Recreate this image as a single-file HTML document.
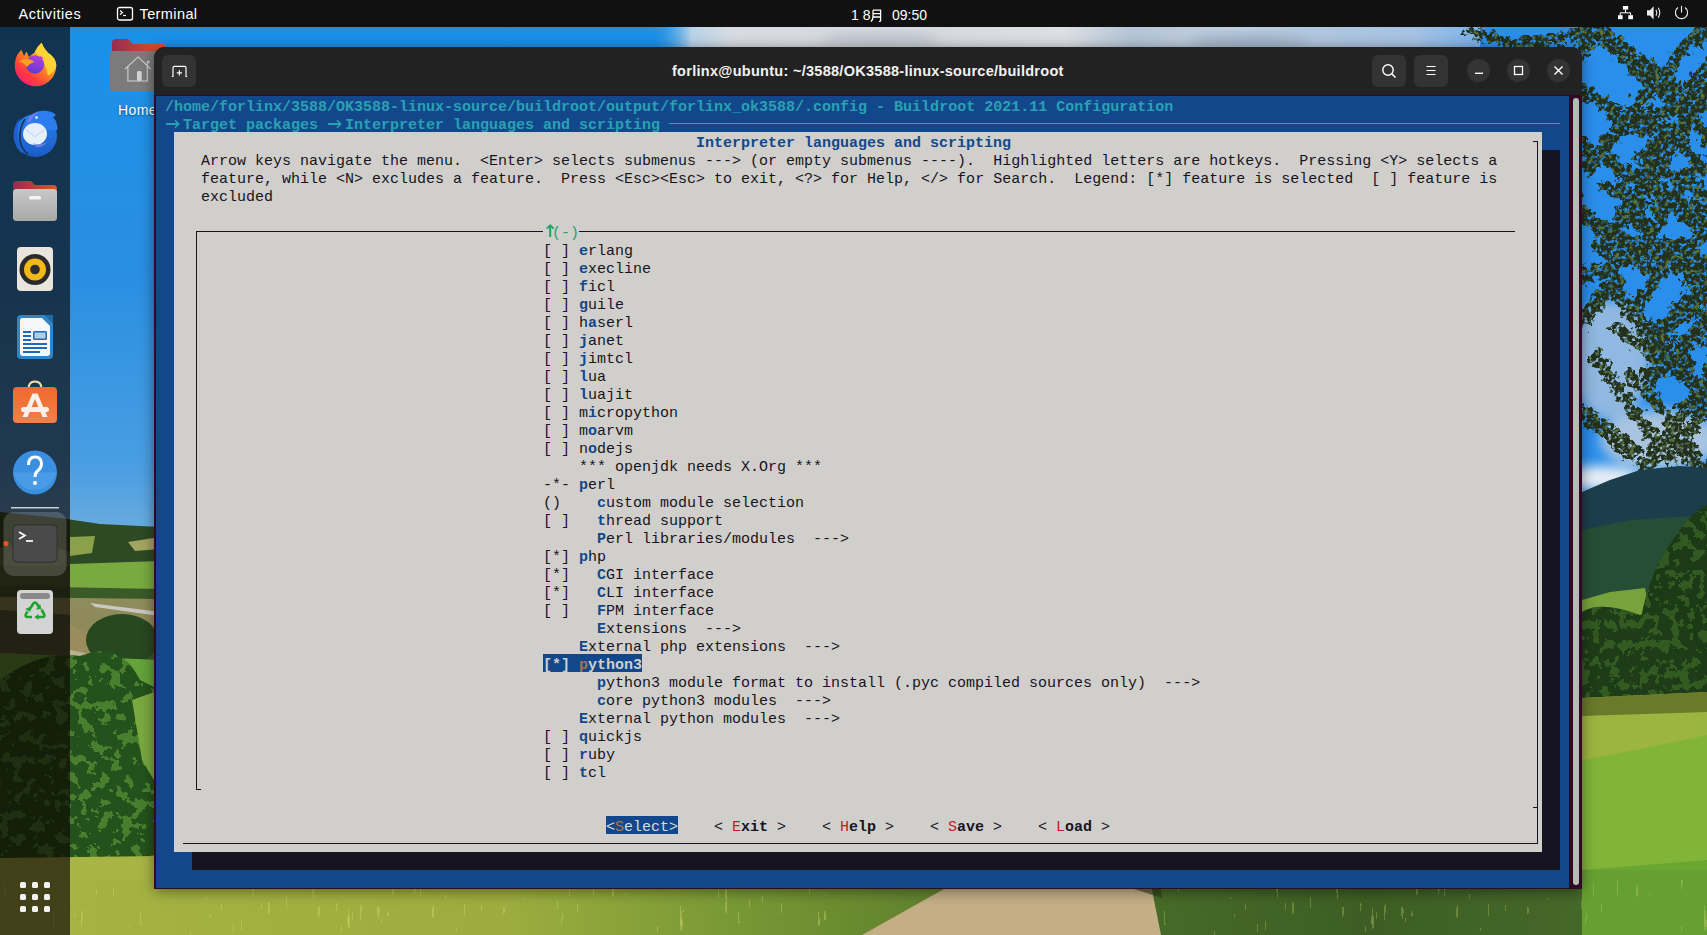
<!DOCTYPE html>
<html><head><meta charset="utf-8">
<style>
*{margin:0;padding:0;box-sizing:border-box}
html,body{width:1707px;height:935px;overflow:hidden;background:#2a8fe0;position:relative;font-family:"Liberation Sans",sans-serif}
.abs{position:absolute}
.row{position:absolute;white-space:pre;font-family:"Liberation Mono",monospace;font-size:15px;line-height:18px;height:18px}
.k{color:#171421}
.kb{color:#171421;font-weight:bold}
.bb{color:#12488b;font-weight:bold}
.c{color:#2aa1b3;font-weight:bold}
.g{color:#26a269}
.r{color:#c01c28;font-weight:bold}
.w{color:#d0cfcc;font-weight:bold}
.wn{color:#dcdbd8}
.yn{color:#b0784a}
.rn{color:#c01c28}
.y{color:#a2734c;font-weight:bold}
.arr{display:inline-block;width:9px;position:relative}
.arr svg{position:absolute;left:1px;top:-9px}
</style></head><body>
<svg class="abs" style="left:0;top:0" width="1707" height="935" viewBox="0 0 1707 935">
<defs>
<linearGradient id="sky" x1="0" y1="0" x2="0" y2="1">
 <stop offset="0" stop-color="#1890e8"/><stop offset="0.3" stop-color="#2a8fe2"/><stop offset="0.5" stop-color="#4a9ee2"/><stop offset="0.57" stop-color="#6aacde"/>
</linearGradient>
<filter id="blur6"><feGaussianBlur stdDeviation="6"/></filter>
<filter id="blur2"><feGaussianBlur stdDeviation="1.5"/></filter>
<filter id="leaves" x="0" y="0" width="100%" height="100%" filterUnits="objectBoundingBox" color-interpolation-filters="sRGB">
 <feTurbulence type="fractalNoise" baseFrequency="0.05 0.065" numOctaves="4" seed="11" result="n"/>
 <feColorMatrix in="n" type="matrix" values="0 0 0 0 0.11  0 0 0 0 0.15  0 0 0 0 0.09  4 0 0 0 -1.62" result="m"/>
 <feComponentTransfer in="m"><feFuncA type="discrete" tableValues="0 0 1 1"/></feComponentTransfer>
</filter>
<filter id="leaves2" x="0" y="0" width="100%" height="100%" filterUnits="objectBoundingBox" color-interpolation-filters="sRGB">
 <feTurbulence type="fractalNoise" baseFrequency="0.12" numOctaves="3" seed="5" result="n"/>
 <feColorMatrix in="n" type="matrix" values="0 0 0 0 0.27  0 0 0 0 0.36  0 0 0 0 0.20  3 0 0 0 -1.5" result="m"/>
 <feComponentTransfer in="m"><feFuncA type="discrete" tableValues="0 0 1 1"/></feComponentTransfer>
</filter>
<filter id="leaves3" x="0" y="0" width="100%" height="100%" filterUnits="objectBoundingBox" color-interpolation-filters="sRGB">
 <feTurbulence type="fractalNoise" baseFrequency="0.09" numOctaves="3" seed="21" result="n"/>
 <feColorMatrix in="n" type="matrix" values="0 0 0 0 0.34  0 0 0 0 0.58  0 0 0 0 0.22  -4 0 0 0 2.2" result="m"/>
 <feComponentTransfer in="m" result="sp"><feFuncA type="discrete" tableValues="0 0 0.7 0.7"/></feComponentTransfer>
 <feComposite in="sp" in2="SourceAlpha" operator="in" result="sp2"/>
 <feMerge><feMergeNode in="SourceGraphic"/><feMergeNode in="sp2"/></feMerge>
</filter>
<filter id="ragged" x="-10%" y="-10%" width="120%" height="120%" color-interpolation-filters="sRGB">
 <feTurbulence type="turbulence" baseFrequency="0.09" numOctaves="2" seed="8" result="t"/>
 <feDisplacementMap in="SourceGraphic" in2="t" scale="16" xChannelSelector="R" yChannelSelector="G" result="d"/>
 <feTurbulence type="fractalNoise" baseFrequency="0.25" numOctaves="2" seed="2" result="h"/>
 <feColorMatrix in="h" type="matrix" values="0 0 0 0 0  0 0 0 0 0  0 0 0 0 0  -5 0 0 0 3.6" result="ha"/>
 <feComposite in="d" in2="ha" operator="in" result="br"/>
 <feTurbulence type="fractalNoise" baseFrequency="0.2" numOctaves="2" seed="9" result="h2"/>
 <feColorMatrix in="h2" type="matrix" values="0 0 0 0 0.34  0 0 0 0 0.46  0 0 0 0 0.24  6 0 0 0 -3.3" result="hl"/>
 <feComposite in="hl" in2="br" operator="in" result="hl2"/>
 <feMerge><feMergeNode in="br"/><feMergeNode in="hl2"/></feMerge>
</filter>
<filter id="leaves4" x="0" y="0" width="100%" height="100%" filterUnits="objectBoundingBox" color-interpolation-filters="sRGB">
 <feTurbulence type="fractalNoise" baseFrequency="0.1" numOctaves="3" seed="31" result="n"/>
 <feColorMatrix in="n" type="matrix" values="0 0 0 0 0.22  0 0 0 0 0.38  0 0 0 0 0.14  -4 0 0 0 2.3" result="m"/>
 <feComponentTransfer in="m" result="sp"><feFuncA type="discrete" tableValues="0 0 0.8 0.8"/></feComponentTransfer>
 <feComposite in="sp" in2="SourceAlpha" operator="in" result="sp2"/>
 <feMerge><feMergeNode in="SourceGraphic"/><feMergeNode in="sp2"/></feMerge>
</filter>
<filter id="grassn" x="0" y="0" width="100%" height="100%" filterUnits="objectBoundingBox" color-interpolation-filters="sRGB">
 <feTurbulence type="fractalNoise" baseFrequency="0.25 0.03" numOctaves="2" seed="3" result="n"/>
 <feColorMatrix in="n" type="matrix" values="0 0 0 0 0.85  0 0 0 0 0.88  0 0 0 0 0.45  2 0 0 0 -1.0"/>
 <feComponentTransfer><feFuncA type="discrete" tableValues="0 0 0.35 0.5"/></feComponentTransfer>
</filter>
<linearGradient id="grassL" x1="0" y1="0" x2="1" y2="0">
 <stop offset="0" stop-color="#a8b444"/><stop offset="0.3" stop-color="#9cac3e"/><stop offset="0.42" stop-color="#7a9a36"/><stop offset="0.5" stop-color="#6a8a30"/><stop offset="0.68" stop-color="#466a28"/><stop offset="0.8" stop-color="#3c5e24"/><stop offset="1" stop-color="#4a6e2c"/>
</linearGradient>
<linearGradient id="cloudg" x1="0" y1="0" x2="1" y2="0">
 <stop offset="0" stop-color="#1a90e8" stop-opacity="0"/><stop offset="0.05" stop-color="#b8d2ea"/><stop offset="0.1" stop-color="#d8dce2"/><stop offset="0.3" stop-color="#d4d8de"/><stop offset="0.5" stop-color="#dcdfe4"/><stop offset="0.58" stop-color="#b4c4d6"/><stop offset="0.7" stop-color="#c0cfdf"/><stop offset="0.8" stop-color="#b0c6de"/><stop offset="0.92" stop-color="#a6c2e2"/><stop offset="1" stop-color="#7ab2ea"/>
</linearGradient>
</defs>
<rect x="0" y="0" width="1707" height="935" fill="url(#sky)"/>
<rect x="650" y="20" width="830" height="40" fill="url(#cloudg)"/>
<g filter="url(#blur6)"><ellipse cx="880" cy="40" rx="60" ry="8" fill="#c0c6ce"/><ellipse cx="1250" cy="42" rx="60" ry="8" fill="#9fb2c8"/></g>
<rect x="1480" y="20" width="227" height="470" fill="#2a8eec"/>
<g filter="url(#blur6)"><ellipse cx="1610" cy="360" rx="40" ry="60" fill="#90b8e0"/><ellipse cx="1660" cy="440" rx="60" ry="30" fill="#a8c4e0"/><ellipse cx="1600" cy="478" rx="40" ry="12" fill="#e8eef4"/></g>
<g stroke="#22301c" fill="none" filter="url(#ragged)"><path d="M1657,238 Q1686,248 1721,269" stroke-width="13"/><path d="M1648,338 Q1677,300 1709,278" stroke-width="15"/><path d="M1680,47 Q1744,6 1798,-49" stroke-width="10"/><path d="M1569,29 Q1657,-14 1724,-39" stroke-width="13"/><path d="M1639,467 Q1684,401 1727,335" stroke-width="13"/><path d="M1622,204 Q1653,243 1707,271" stroke-width="11"/><path d="M1658,469 Q1700,529 1747,598" stroke-width="16"/><path d="M1613,128 Q1683,101 1755,73" stroke-width="11"/><path d="M1566,331 Q1594,293 1619,270" stroke-width="16"/><path d="M1601,37 Q1654,82 1706,133" stroke-width="12"/><path d="M1630,150 Q1703,192 1778,232" stroke-width="11"/><path d="M1670,107 Q1723,33 1762,-26" stroke-width="10"/><path d="M1596,251 Q1643,168 1690,109" stroke-width="17"/><path d="M1658,426 Q1692,457 1725,490" stroke-width="17"/><path d="M1699,141 Q1741,97 1805,62" stroke-width="14"/><path d="M1625,315 Q1655,258 1708,225" stroke-width="12"/><path d="M1690,81 Q1730,89 1772,119" stroke-width="14"/><path d="M1695,307 Q1734,359 1769,391" stroke-width="15"/><path d="M1611,287 Q1642,329 1689,362" stroke-width="14"/><path d="M1677,436 Q1721,383 1750,336" stroke-width="13"/><path d="M1588,347 Q1629,406 1668,460" stroke-width="13"/><path d="M1648,117 Q1673,133 1706,169" stroke-width="12"/><path d="M1573,85 Q1615,112 1648,131" stroke-width="13"/><path d="M1564,188 Q1597,231 1651,269" stroke-width="13"/><path d="M1608,130 Q1653,104 1708,93" stroke-width="13"/><path d="M1636,156 Q1682,112 1745,69" stroke-width="14"/><path d="M1664,250 Q1734,291 1788,344" stroke-width="18"/><path d="M1625,260 Q1664,204 1694,156" stroke-width="12"/><path d="M1633,168 Q1664,205 1697,228" stroke-width="11"/><path d="M1567,136 Q1639,175 1707,219" stroke-width="14"/><path d="M1578,168 Q1626,114 1660,65" stroke-width="14"/><path d="M1610,323 Q1682,366 1738,425" stroke-width="15"/><path d="M1576,404 Q1613,437 1634,452" stroke-width="17"/><path d="M1695,471 Q1735,437 1757,391" stroke-width="12"/><path d="M1566,276 Q1614,265 1646,234" stroke-width="14"/><path d="M1640,376 Q1674,349 1699,321" stroke-width="19"/><path d="M1561,65 Q1603,18 1639,-27" stroke-width="15"/><path d="M1685,407 Q1729,371 1752,335" stroke-width="17"/><path d="M1701,338 Q1761,381 1827,446" stroke-width="14"/><path d="M1594,180 Q1617,189 1664,210" stroke-width="10"/><path d="M1643,336 Q1698,296 1738,249" stroke-width="19"/><path d="M1622,368 Q1661,406 1693,452" stroke-width="12"/><path d="M1672,474 Q1709,483 1747,509" stroke-width="16"/><path d="M1594,26 Q1633,52 1677,87" stroke-width="14"/><path d="M1687,196 Q1757,241 1820,282" stroke-width="10"/><path d="M1617,126 Q1658,67 1702,19" stroke-width="12"/><path d="M1575,212 Q1633,242 1687,268" stroke-width="13"/><path d="M1615,174 Q1642,231 1689,281" stroke-width="11"/><path d="M1460,27 L1560,50" stroke-width="10"/><path d="M1500,40 L1600,27" stroke-width="10"/></g>
<path d="M1582,492 L1610,480 L1640,470 L1680,466 L1707,468 L1707,620 L1582,620 Z" fill="#1c3e4c"/>
<path d="M1582,530 L1630,520 L1707,515 L1707,620 L1582,620 Z" fill="#264e36"/>
<path d="M1582,600 L1610,592 L1645,588 L1650,615 L1582,618 Z" fill="#78a23c"/>
<path d="M1640,700 Q1630,620 1660,560 Q1690,510 1707,505 L1707,700 Z" fill="#1c3a16" filter="url(#leaves4)"/>
<path d="M1582,700 L1582,612 Q1600,600 1640,615 Q1680,600 1700,650 L1707,700 Z" fill="#1e3c18" filter="url(#leaves4)"/>
<path d="M1582,698 L1707,692 L1707,770 L1582,775 Z" fill="#9cb440"/>
<path d="M1582,698 L1707,692 L1707,712 L1582,716 Z" fill="#6a7a2a"/>
<path d="M1582,760 Q1640,750 1707,735 L1707,935 L1582,935 Z" fill="#82b43a"/>
<path d="M1582,870 L1707,860 L1707,935 L1582,935 Z" fill="#6aa632"/>
<rect x="0" y="540" width="160" height="330" fill="#3a5a2a"/>
<path d="M0,512 L60,518 L100,524 L160,527 L160,566 L0,566 Z" fill="#2c4a24"/>
<path d="M70,537 L95,536 L92,553 L70,556 Z" fill="#8aa04a"/>
<path d="M128,542 L160,537 L160,549 L135,551 Z" fill="#a4a462"/>
<path d="M0,548 L30,540 L70,552 L70,568 L0,568 Z" fill="#5a7040"/>
<path d="M70,564 L160,561 L160,592 L70,588 Z" fill="#78aa40"/>
<path d="M0,566 L70,566 L70,588 L0,588 Z" fill="#4a6034"/>
<path d="M0,586 L160,589 L160,601 L0,598 Z" fill="#3a5a28"/>
<path d="M0,597 L160,599 L160,627 L0,622 Z" fill="#8e8c5a"/>
<path d="M90,603 L160,612 L160,616 L95,607 Z" fill="#c8c8c0"/>
<path d="M70,612 L90,606 L110,620 L160,618 L160,642 L70,642 Z" fill="#8e8a5a"/>
<path d="M70,625 L105,640 L105,662 L70,662 Z" fill="#9a8c5c"/>
<path d="M0,610 L70,615 L70,662 L0,662 Z" fill="#50583a"/>
<ellipse cx="122" cy="640" rx="36" ry="26" fill="#284820"/>
<path d="M0,653 L160,660 L160,702 L0,702 Z" fill="#64a23a"/>
<path d="M70,650 L95,655 L100,668 L70,660 Z" fill="#b8b090"/>
<path d="M0,680 Q40,650 80,656 Q120,640 140,680 L160,690 L160,860 L0,860 Z" fill="#24521c" filter="url(#leaves3)"/>
<path d="M132,700 L160,690 L160,790 L142,760 Z" fill="#7aa840"/>
<path d="M0,858 L160,856 L160,935 L0,935 Z" fill="#a8b444"/>
<rect x="0" y="880" width="1707" height="60" fill="url(#grassL)"/>
<path d="M960,880 L1150,880 L1161,935 L862,935 Z" fill="#c4ae86"/>
<rect x="0" y="880" width="860" height="60" fill="#000" filter="url(#grassn)"/>
<rect x="1582" y="870" width="125" height="65" fill="#66a032"/>
<rect x="1160" y="880" width="547" height="60" fill="#000" filter="url(#grassn)" opacity="0.8"/>
<path d="M1125,886 L1160,884 L1162,898 Z" fill="#2a3a1a" opacity="0.6"/>
</svg>

<!-- top bar -->
<div class="abs" style="left:0;top:0;width:1707px;height:27px;background:#111111"></div>
<div class="abs" style="left:18.5px;top:4px;font-size:14.5px;color:#fff;line-height:20px;letter-spacing:0.55px">Activities</div>
<svg class="abs" style="left:116px;top:6px" width="18" height="16" viewBox="0 0 18 16"><rect x="1.5" y="1.5" width="15" height="12.5" rx="2" fill="none" stroke="#fff" stroke-width="1.3"/><path d="M4 4.5 L6.5 6.5 L4 8.5" fill="none" stroke="#fff" stroke-width="1.2"/><path d="M7 9.5 H10" stroke="#fff" stroke-width="1.2"/></svg>
<div class="abs" style="left:139.5px;top:4px;font-size:14.5px;color:#fff;line-height:20px;letter-spacing:0.4px">Terminal</div>
<div class="abs" style="left:851px;top:5px;font-size:14px;color:#fff;line-height:20px;white-space:pre">1 8</div>
<svg class="abs" style="left:870px;top:9px" width="13" height="13" viewBox="0 0 13 13"><path d="M3 1.2V7.5Q3 10.8 1 12.6M3 1.2H10.6V11.4Q10.6 12.6 9 12.4M3 4.6H10.6M3 8H10.6" stroke="#fff" stroke-width="1.3" fill="none"/></svg>
<div class="abs" style="left:892px;top:5px;font-size:14px;color:#fff;line-height:20px;white-space:pre">09:50</div>
<!-- tray icons -->
<svg class="abs" style="left:1600px;top:0" width="107" height="27" viewBox="1600 0 107 27">
 <g fill="#fff"><rect x="1622.9" y="6" width="5.3" height="3.6"/><rect x="1618" y="15.2" width="4.6" height="4"/><rect x="1628.3" y="15.2" width="4.7" height="4"/></g>
 <path d="M1625.5 9.5V12.8M1620.3 15.3V12.8H1630.6V15.3" stroke="#fff" stroke-width="1" fill="none"/>
 <path d="M1647 10.3H1650L1653.6 6.2V19.6L1650 15.6H1647Z" fill="#eee"/>
 <path d="M1656 9.8Q1657.6 12.8 1656 15.8M1658.2 7.8Q1661.3 12.8 1658.2 17.8" stroke="#eee" stroke-width="1.1" fill="none"/>
 <path d="M1681.5 5.8V12.6" stroke="#eee" stroke-width="1.1"/><path d="M1678 7.5A6.1 6.1 0 1 0 1685 7.5" stroke="#eee" stroke-width="1.1" fill="none"/>
</svg>

<!-- dock -->
<div class="abs" style="left:0;top:27px;width:70px;height:908px;background:rgba(12,4,2,0.66)"></div>
<svg class="abs" style="left:0;top:27px" width="70" height="908" viewBox="0 27 70 908">
 <defs>
  <radialGradient id="ffo" cx="0.35" cy="0.8" r="0.9"><stop offset="0" stop-color="#ff3a5a"/><stop offset="0.45" stop-color="#ff6a2a"/><stop offset="0.8" stop-color="#ffb020"/><stop offset="1" stop-color="#ffd030"/></radialGradient>
  <radialGradient id="ffp" cx="0.4" cy="0.4" r="0.7"><stop offset="0" stop-color="#9a3ad8"/><stop offset="1" stop-color="#5a2ab0"/></radialGradient>
  <linearGradient id="tbb" x1="0" y1="0" x2="0" y2="1"><stop offset="0" stop-color="#2a80ee"/><stop offset="1" stop-color="#1a5cc8"/></linearGradient>
  <linearGradient id="fold" x1="0" y1="0" x2="1" y2="0"><stop offset="0" stop-color="#9a2a52"/><stop offset="1" stop-color="#e0561e"/></linearGradient>
  <linearGradient id="foldb" x1="0" y1="0" x2="0" y2="1"><stop offset="0" stop-color="#c8c8c8"/><stop offset="1" stop-color="#a8a8a8"/></linearGradient>
  <linearGradient id="appc" x1="0" y1="0" x2="0" y2="1"><stop offset="0" stop-color="#f06a2a"/><stop offset="1" stop-color="#f0804a"/></linearGradient>
 </defs>
 <!-- firefox -->
 <defs>
  <linearGradient id="ffb" x1="0.9" y1="0.1" x2="0.2" y2="1"><stop offset="0" stop-color="#ffe030"/><stop offset="0.45" stop-color="#ff8a20"/><stop offset="0.75" stop-color="#ff3a40"/><stop offset="1" stop-color="#ff1a80"/></linearGradient>
  <linearGradient id="ffg" x1="0.7" y1="0" x2="0.3" y2="1"><stop offset="0" stop-color="#b840e0"/><stop offset="1" stop-color="#5a3ad0"/></linearGradient>
 </defs>
 <path d="M21.5 50 L24 56 L26.5 51.5 L29 57 Q32 54 34.5 52.5 Q36.5 47 41.5 42.7 Q45 51 51 55 Q56.5 60 56.3 66 A20.8 20.8 0 1 1 15.2 61 Q16.5 54 21.5 50 Z" fill="url(#ffb)"/>
 <path d="M34.5 52.5 Q36.5 47 41.5 42.7 Q45 51 51 55 Q56.5 60 56.3 66 Q54 72 48 76 Q46 62 36 53 Z" fill="#ffd838" opacity="0.85"/>
 <circle cx="35" cy="64.5" r="9.2" fill="url(#ffg)"/>
 <path d="M19 61 Q24 58 30 59.5 Q33 60.5 34.5 62 Q30 63 27 67 Q24 63 19 61 Z" fill="#ffa020"/>
 <path d="M40 56 Q43 57 43.5 59 L39.5 58 Z" fill="#b840e0"/>
 <!-- thunderbird -->
 <circle cx="35.5" cy="135.5" r="21.5" fill="url(#tbb)"/>
 <path d="M26 126 Q28 113 40 111 Q51 110 56 115 L53 117.5 Q57.5 121 57.5 130 L40 130 Z" fill="#2a7ef0"/>
 <path d="M27 122 Q30 113 40 111.5 Q34 114 30 122 Z" fill="#9a7ae8" opacity="0.7"/>
 <path d="M20.5 116 Q12 126 13 138 Q15 150 24 155 Q17 144 17.5 132 Q18 122 20.5 116 Z" fill="#1a62d0"/>
 <path d="M25 119 Q19 128 20 140 Q21 149 28 154" stroke="#1b3250" stroke-width="1.6" fill="none"/>
 <path d="M20.5 116 Q12 126 13 138 Q15 150 24 155" stroke="#1b3250" stroke-width="1.2" fill="none"/>
 <circle cx="36.5" cy="117.5" r="1.2" fill="#fff"/>
 <ellipse cx="35" cy="134" rx="12" ry="11" fill="#e6f0fc"/>
 <path d="M25.5 129.5 L34 136 Q35 137 36 136 L44.5 129.5" stroke="#c8dcf4" stroke-width="1.3" fill="none"/>
 <path d="M33 143 Q40 146 47 142 Q43 148 36 147 Z" fill="#7a8ae0" opacity="0.8"/>
 <!-- files -->
 <path d="M13 185 Q13 181 17 181 H31 L35 185 H53 Q57 185 57 189 V200 H13 Z" fill="url(#fold)"/>
 <rect x="13" y="189" width="44" height="32" rx="3.5" fill="url(#foldb)"/>
 <rect x="29" y="196" width="12" height="3.5" rx="1.5" fill="#f4f4f4"/>
 <!-- rhythmbox -->
 <rect x="17" y="247" width="36" height="44" rx="4" fill="#e9e5dc"/>
 <circle cx="35" cy="269.5" r="15.5" fill="#2a2a2e"/>
 <circle cx="35" cy="269.5" r="11" fill="#f0b818"/>
 <circle cx="35" cy="269.5" r="4.8" fill="#2e2e30"/>
 <!-- writer -->
 <path d="M21 315 H45 L53 323 V355 Q53 359 49 359 H21 Q17 359 17 355 V319 Q17 315 21 315 Z" fill="#2f86c6"/>
 <path d="M22 318 H42 L50 326 V353 Q50 356 47 356 H23 Q20 356 20 353 V321 Q20 318 22 318 Z" fill="#f6f6f6"/>
 <path d="M45 315 H53 V323 Z" fill="#1f6aa8"/>
 <rect x="23" y="331" width="8" height="2" fill="#1a6ac0"/><rect x="23" y="335" width="8" height="2" fill="#1a6ac0"/><rect x="23" y="339" width="8" height="2" fill="#1a6ac0"/>
 <rect x="23" y="343" width="24" height="2" fill="#1a6ac0"/><rect x="23" y="347" width="24" height="2" fill="#1a6ac0"/><rect x="23" y="351" width="17" height="2" fill="#1a6ac0"/>
 <rect x="33" y="331" width="14" height="9" rx="1.5" fill="#1a6ac0"/><rect x="34.5" y="332.5" width="11" height="6" fill="#a8d0f0"/>
 <!-- app center -->
 <path d="M28.5 389 Q28.5 381.5 35 381.5 Q41.5 381.5 41.5 389" stroke="#f6dfb0" stroke-width="2.2" fill="none"/>
 <rect x="13" y="387" width="44" height="36" rx="4" fill="url(#appc)"/>
 <path d="M22.5 417 L32.5 393.5 H37.5 L47.5 417 H42.5 L35 399 L27.5 417 Z" fill="#faf0ea"/>
 <rect x="21" y="407" width="28" height="5" rx="2.5" fill="#faf0ea"/>
 <!-- help -->
 <circle cx="35" cy="472.5" r="22" fill="#3b8fe0"/>
 <path d="M13.5 472.5 A22 22 0 0 0 56.5 472.5 Z" fill="#4a9be6"/>
 <path d="M28.5 465 Q28.5 457 35 457 Q41.5 457 41.5 464 Q41.5 468 37.5 471 Q35 473 35 477" stroke="#fff" stroke-width="3" fill="none"/>
 <circle cx="35" cy="483" r="2" fill="#fff"/>
 <!-- separator -->
 <rect x="11" y="507" width="48" height="1.5" fill="#cfcfcf"/>
 <!-- terminal active -->
 <rect x="3.5" y="512" width="63" height="64" rx="10" fill="rgba(255,255,255,0.17)"/>
 <rect x="13" y="525" width="44" height="37" rx="4" fill="#3e3e3e" stroke="#2a2a2a" stroke-width="1"/>
 <rect x="13.5" y="525.5" width="43" height="36" rx="4" fill="#4a4a4a"/>
 <path d="M19 532 L25 535.5 L19 539" stroke="#fff" stroke-width="1.7" fill="none"/>
 <path d="M26 541 H33" stroke="#fff" stroke-width="1.7"/>
 <circle cx="6" cy="543.5" r="2.6" fill="#ee5522"/>
 <!-- trash -->
 <rect x="17" y="590" width="36" height="44" rx="4" fill="#d4d4d4"/>
 <rect x="20" y="593" width="30" height="6" rx="3" fill="#8a8a8a"/>
 <g fill="none" stroke="#22a030" stroke-width="2.6" stroke-linejoin="round">
  <path d="M29.5 609.5 L33 604 Q35 601 37 604 L38.5 606.5"/>
  <path d="M41.5 609.5 L44 614 Q45.5 617 42 617 L38 617"/>
  <path d="M32 617 L28 617 Q24.5 617 26 614 L27.5 611.5"/>
 </g>
 <g fill="#22a030"><path d="M36 609.5 L41.5 609 L40 604 Z"/><path d="M38.5 620 L38.5 614 L34.5 617 Z"/><path d="M25 609 L30.5 612 L30 607 Z"/></g>
 <!-- app grid -->
 <g fill="#f2f2f2">
  <rect x="20" y="882" width="6" height="6" rx="1.5"/><rect x="32" y="882" width="6" height="6" rx="1.5"/><rect x="44" y="882" width="6" height="6" rx="1.5"/>
  <rect x="20" y="894" width="6" height="6" rx="1.5"/><rect x="32" y="894" width="6" height="6" rx="1.5"/><rect x="44" y="894" width="6" height="6" rx="1.5"/>
  <rect x="20" y="906" width="6" height="6" rx="1.5"/><rect x="32" y="906" width="6" height="6" rx="1.5"/><rect x="44" y="906" width="6" height="6" rx="1.5"/>
 </g>
</svg>


<!-- desktop home icon -->
<svg class="abs" style="left:108px;top:37px" width="60" height="60" viewBox="0 0 60 60">
 <defs><linearGradient id="ftab" x1="0" y1="0" x2="1" y2="0"><stop offset="0" stop-color="#9a2a52"/><stop offset="1" stop-color="#e2561e"/></linearGradient></defs>
 <path d="M4 6 Q4 2 8 2 H20 L25 7 H54 Q58 7 58 11 V20 H4 Z" fill="url(#ftab)"/>
 <rect x="2" y="14" width="56" height="41" rx="4" fill="#7b7b7b"/>
 <path d="M16.9 32.1 L30.1 19.9 L42.8 32.1 M19.9 29.5 V44 H39.3 V24.5" stroke="#d2d2d2" stroke-width="1.1" fill="none"/>
 <path d="M38.8 24.5 L41.5 23.5 L41.5 26.5 Z" fill="#d2d2d2"/>
 <rect x="29" y="34" width="4.7" height="10" rx="1.5" fill="#d2d2d2"/>
</svg>
<div class="abs" style="left:118px;top:101px;font-size:14px;color:#fff;line-height:18px;letter-spacing:0.4px;text-shadow:0 1px 2px rgba(0,0,0,0.5)">Home</div>

<!-- window -->
<div class="abs" style="left:154px;top:47px;width:1428px;height:842px;background:#300a24;border-radius:11px 11px 0 0;overflow:hidden;box-shadow:0 2px 14px rgba(0,0,0,0.45)">
  <div class="abs" style="left:0;top:0;width:1428px;height:48px;background:#222222"></div>
</div>
<div class="abs" style="left:162px;top:55px;width:34px;height:32px;background:#333333;border-radius:6px"></div>
<svg class="abs" style="left:170px;top:62px" width="18" height="18" viewBox="0 0 18 18"><path d="M1.8 14.5 H3 V5.8 Q3 4.4 4.4 4.4 H14.6 Q16 4.4 16 5.8 V14.5 H17.2" stroke="#fff" stroke-width="1.15" fill="none"/><path d="M9.4 8.2 V13.4 M6.8 10.8 H12" stroke="#fff" stroke-width="1.15"/></svg>
<div class="abs" style="left:672px;top:61px;font-size:14.5px;font-weight:bold;color:#f2f2f2;line-height:20px;white-space:nowrap;letter-spacing:0.28px">forlinx@ubuntu: ~/3588/OK3588-linux-source/buildroot</div>
<!-- header buttons -->
<div class="abs" style="left:1372px;top:55px;width:34px;height:32px;background:#333333;border-radius:6px"></div>
<svg class="abs" style="left:1380px;top:62px" width="18" height="18" viewBox="0 0 18 18"><circle cx="8" cy="8" r="5.2" stroke="#fff" stroke-width="1.4" fill="none"/><path d="M11.8 11.8 L15.5 15.5" stroke="#fff" stroke-width="1.6"/></svg>
<div class="abs" style="left:1414px;top:55px;width:34px;height:32px;background:#333333;border-radius:6px"></div>
<svg class="abs" style="left:1422px;top:62px" width="18" height="18" viewBox="0 0 18 18"><path d="M4.5 4.5 H13.5 M4.5 8.5 H13.5 M4.5 12.5 H13.5" stroke="#fff" stroke-width="1.1"/></svg>
<div class="abs" style="left:1467px;top:59px;width:23px;height:23px;background:#333333;border-radius:50%"></div>
<div class="abs" style="left:1507px;top:59px;width:23px;height:23px;background:#333333;border-radius:50%"></div>
<div class="abs" style="left:1547px;top:59px;width:23px;height:23px;background:#333333;border-radius:50%"></div>
<svg class="abs" style="left:1467px;top:59px" width="104" height="23" viewBox="0 0 104 23">
 <path d="M8 14.3 H16" stroke="#fff" stroke-width="1.4"/>
 <rect x="47.5" y="7.5" width="8" height="8" stroke="#fff" stroke-width="1.3" fill="none"/>
 <path d="M87.5 7.5 L95.5 15.5 M95.5 7.5 L87.5 15.5" stroke="#fff" stroke-width="1.4"/>
</svg>
<div class="abs" style="left:1573px;top:98px;width:6px;height:787px;background:#b8b8b8;border-radius:3px"></div>

<div style="position:absolute;left:156px;top:96px;width:1413px;height:792px;background:#12488b"></div>
<div style="position:absolute;left:1542px;top:150px;width:18px;height:720px;background:#171421"></div>
<div style="position:absolute;left:192px;top:852px;width:1368px;height:18px;background:#171421"></div>
<div style="position:absolute;left:174px;top:132px;width:1368px;height:720px;background:#d0cfcc"></div>
<div style="position:absolute;left:543px;top:654px;width:99px;height:18px;background:#12488b"></div>
<div style="position:absolute;left:606px;top:816px;width:72px;height:18px;background:#12488b"></div>
<div style="position:absolute;left:669px;top:123px;width:891px;height:1px;background:#2aa1b3"></div>
<div style="position:absolute;left:196px;top:231px;width:347px;height:1px;background:#171421"></div>
<div style="position:absolute;left:579px;top:231px;width:936px;height:1px;background:#171421"></div>
<div style="position:absolute;left:196px;top:231px;width:1px;height:559px;background:#171421"></div>
<div style="position:absolute;left:196px;top:789px;width:5px;height:1px;background:#171421"></div>
<div style="position:absolute;left:1533px;top:141px;width:5px;height:1px;background:#171421"></div>
<div style="position:absolute;left:1537px;top:141px;width:1px;height:703px;background:#171421"></div>
<div style="position:absolute;left:183px;top:843px;width:1355px;height:1px;background:#171421"></div>
<div style="position:absolute;left:1533px;top:807px;width:5px;height:1px;background:#171421"></div>
<div class="row" style="left:165px;top:99px"><span class="c">/home/forlinx/3588/OK3588-linux-source/buildroot/output/forlinx_ok3588/.config - Buildroot 2021.11 Configuration</span></div>
<div class="row" style="left:165px;top:117px"><span class="c">  Target packages   Interpreter languages and scripting</span></div>
<div class="row" style="left:696px;top:135px"><span class="bb">Interpreter languages and scripting</span></div>
<div class="row" style="left:201px;top:153px"><span class="k">Arrow keys navigate the menu.  &lt;Enter&gt; selects submenus ---&gt; (or empty submenus ----).  Highlighted letters are hotkeys.  Pressing &lt;Y&gt; selects a</span></div>
<div class="row" style="left:201px;top:171px"><span class="k">feature, while &lt;N&gt; excludes a feature.  Press &lt;Esc&gt;&lt;Esc&gt; to exit, &lt;?&gt; for Help, &lt;/&gt; for Search.  Legend: [*] feature is selected  [ ] feature is</span></div>
<div class="row" style="left:201px;top:189px"><span class="k">excluded</span></div>
<div class="row" style="left:552px;top:225px"><span class="g">(-)</span></div>
<div class="row" style="left:543px;top:243px"><span class="k">[ ] </span><span class="bb">e</span><span class="k">rlang</span></div>
<div class="row" style="left:543px;top:261px"><span class="k">[ ] </span><span class="bb">e</span><span class="k">xecline</span></div>
<div class="row" style="left:543px;top:279px"><span class="k">[ ] </span><span class="bb">f</span><span class="k">icl</span></div>
<div class="row" style="left:543px;top:297px"><span class="k">[ ] </span><span class="bb">g</span><span class="k">uile</span></div>
<div class="row" style="left:543px;top:315px"><span class="k">[ ] </span><span class="k">h</span><span class="bb">a</span><span class="k">serl</span></div>
<div class="row" style="left:543px;top:333px"><span class="k">[ ] </span><span class="bb">j</span><span class="k">anet</span></div>
<div class="row" style="left:543px;top:351px"><span class="k">[ ] </span><span class="bb">j</span><span class="k">imtcl</span></div>
<div class="row" style="left:543px;top:369px"><span class="k">[ ] </span><span class="bb">l</span><span class="k">ua</span></div>
<div class="row" style="left:543px;top:387px"><span class="k">[ ] </span><span class="bb">l</span><span class="k">uajit</span></div>
<div class="row" style="left:543px;top:405px"><span class="k">[ ] </span><span class="k">m</span><span class="bb">i</span><span class="k">cropython</span></div>
<div class="row" style="left:543px;top:423px"><span class="k">[ ] </span><span class="k">m</span><span class="bb">o</span><span class="k">arvm</span></div>
<div class="row" style="left:543px;top:441px"><span class="k">[ ] </span><span class="k">n</span><span class="bb">o</span><span class="k">dejs</span></div>
<div class="row" style="left:543px;top:459px"><span class="k">    </span><span class="k">*** openjdk needs X.Org ***</span></div>
<div class="row" style="left:543px;top:477px"><span class="k">-*- </span><span class="bb">p</span><span class="k">erl</span></div>
<div class="row" style="left:543px;top:495px"><span class="k">()    </span><span class="bb">c</span><span class="k">ustom module selection</span></div>
<div class="row" style="left:543px;top:513px"><span class="k">[ ]   </span><span class="bb">t</span><span class="k">hread support</span></div>
<div class="row" style="left:543px;top:531px"><span class="k">      </span><span class="bb">P</span><span class="k">erl libraries/modules  ---&gt;</span></div>
<div class="row" style="left:543px;top:549px"><span class="k">[*] </span><span class="bb">p</span><span class="k">hp</span></div>
<div class="row" style="left:543px;top:567px"><span class="k">[*]   </span><span class="bb">C</span><span class="k">GI interface</span></div>
<div class="row" style="left:543px;top:585px"><span class="k">[*]   </span><span class="bb">C</span><span class="k">LI interface</span></div>
<div class="row" style="left:543px;top:603px"><span class="k">[ ]   </span><span class="bb">F</span><span class="k">PM interface</span></div>
<div class="row" style="left:543px;top:621px"><span class="k">      </span><span class="bb">E</span><span class="k">xtensions  ---&gt;</span></div>
<div class="row" style="left:543px;top:639px"><span class="k">    </span><span class="bb">E</span><span class="k">xternal php extensions  ---&gt;</span></div>
<div class="row" style="left:543px;top:657px"><span class="w">[*] </span><span class="y">p</span><span class="w">ython3</span></div>
<div class="row" style="left:543px;top:675px"><span class="k">      </span><span class="bb">p</span><span class="k">ython3 module format to install (.pyc compiled sources only)  ---&gt;</span></div>
<div class="row" style="left:543px;top:693px"><span class="k">      </span><span class="bb">c</span><span class="k">ore python3 modules  ---&gt;</span></div>
<div class="row" style="left:543px;top:711px"><span class="k">    </span><span class="bb">E</span><span class="k">xternal python modules  ---&gt;</span></div>
<div class="row" style="left:543px;top:729px"><span class="k">[ ] </span><span class="bb">q</span><span class="k">uickjs</span></div>
<div class="row" style="left:543px;top:747px"><span class="k">[ ] </span><span class="bb">r</span><span class="k">uby</span></div>
<div class="row" style="left:543px;top:765px"><span class="k">[ ] </span><span class="bb">t</span><span class="k">cl</span></div>
<div class="row" style="left:606px;top:819px"><span class="wn">&lt;</span><span class="yn">S</span><span class="wn">elect&gt;</span></div>
<div class="row" style="left:714px;top:819px"><span class="k">&lt; </span><span class="rn">E</span><span class="kb">xit</span><span class="k"> &gt;</span></div>
<div class="row" style="left:822px;top:819px"><span class="k">&lt; </span><span class="rn">H</span><span class="kb">elp</span><span class="k"> &gt;</span></div>
<div class="row" style="left:930px;top:819px"><span class="k">&lt; </span><span class="rn">S</span><span class="kb">ave</span><span class="k"> &gt;</span></div>
<div class="row" style="left:1038px;top:819px"><span class="k">&lt; </span><span class="rn">L</span><span class="kb">oad</span><span class="k"> &gt;</span></div>
<svg class="abs" style="left:166px;top:119px" width="14" height="10" viewBox="0 0 14 10"><path d="M0 5H12.5" stroke="#2aa1b3" stroke-width="2"/><path d="M9 1.3L12.7 5L9 8.7" stroke="#2aa1b3" stroke-width="1.6" fill="none"/></svg>
<svg class="abs" style="left:328px;top:119px" width="14" height="10" viewBox="0 0 14 10"><path d="M0 5H12.5" stroke="#2aa1b3" stroke-width="2"/><path d="M9 1.3L12.7 5L9 8.7" stroke="#2aa1b3" stroke-width="1.6" fill="none"/></svg>
<svg class="abs" style="left:545px;top:223px" width="10" height="15" viewBox="0 0 10 15"><path d="M5.2 2.5V14" stroke="#26a269" stroke-width="2.1"/><path d="M1.8 5.6L5.2 2.2L8.6 5.6" stroke="#26a269" stroke-width="1.8" fill="none"/></svg>
</body></html>
